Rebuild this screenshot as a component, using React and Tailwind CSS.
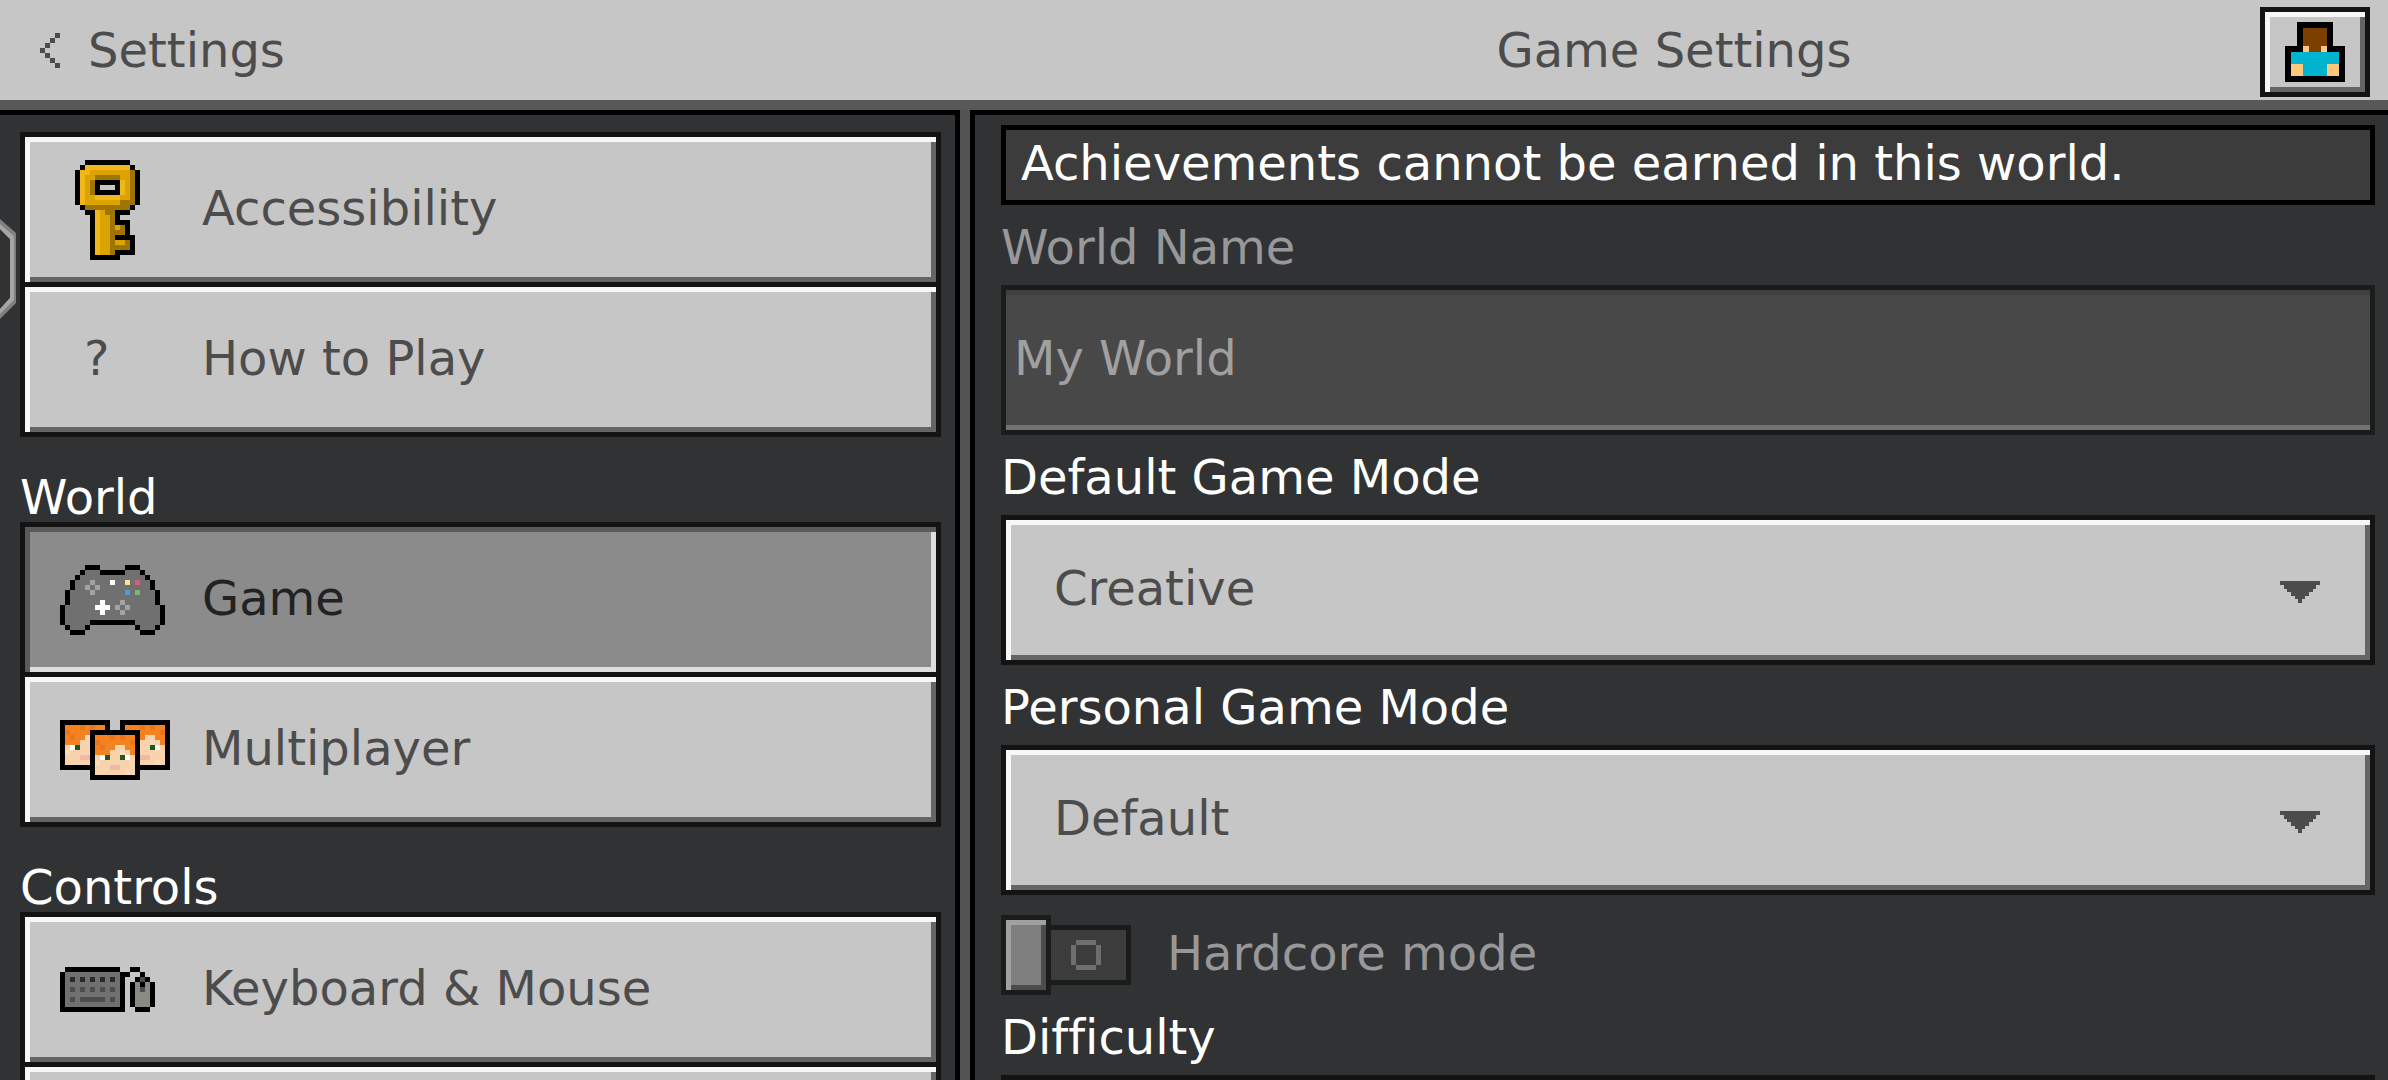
import { useId, useState } from 'react'

const colors = {
  k: '#000000', y: '#f0b71e', g: '#dba400', d: '#9f7500',
  m: '#707070', a: '#8a8a84', s: '#a3a3a3', w: '#ffffff', e: '#2a2a2a', n: '#4d4d4d',
  l: '#fbe391', r: '#dc5c74', b: '#4f9fce', v: '#86b36c',
  o: '#f58220', O: '#e8761a', f: '#f8d3ae', F: '#fbdcbc', p: '#f2b7a5', t: '#1f5a16',
  h: '#7b3f00', c: '#00b3cf', i: '#fdc87d', x: '#4c4c4c',
}

const key = [
  '..kkkkkkkkk..',
  '.kyyyyyyyyyk.',
  'kyyggggggggdk',
  'kyggdddddggdk',
  'kygdkkkkkygdk',
  'kygdk...kygdk',
  'kygdkkkkkygdk',
  'kyggyyyyyggdk',
  'kygggggggdddk',
  '.kdddddddddk.',
  '..kkygddkkk..',
  '...kyggdk....',
  '...kyggdkkk..',
  '...kyggdgdk..',
  '...kyggdddk..',
  '...kyggdkkkk.',
  '...kyggdggdk.',
  '...kyggddddk.',
  '...kyggdkkkk.',
  '...kkkkkk....',
]

const controller = [
  '.....kkk.....kkk.....',
  '....kmmmkkkkkmmmk....',
  '...kmmmmmmmmmmmmmk...',
  '..kmmmsmmmwmmlmrmmk..',
  '..kmmsmsmmmmmmmmmmk..',
  '.kmmmmsmmmmmmbmvmmmk.',
  '.kmmmmmmmmmmmmmmmmmk.',
  '.kmmmmmmwmmmsmmmmmmk.',
  'kmmmmmmwwwmsmsmmmmmmk',
  'kmmmmmmmwmmmsmmmmmmmk',
  'kmmmmmmmmmmmmmmmmmmmk',
  'kmmmmmkkkkkkkkkmmmmmk',
  '.kmmmk.........kmmmk.',
  '..kkk...........kkk..',
]

const face = [
  'kkkkkkkkkk',
  'koooOoOook',
  'kOooooooOk',
  'koOooffook',
  'koooffFfok',
  'kfwtfftwfk',
  'kFfffffffk',
  'kfffppfffk',
  'kffffffFfk',
  'kkkkkkkkkk',
]

const keyboard = [
  '.kkkkkkkkkkk..kk...',
  'kmmmmmmmmmmmkk..k..',
  'kmemememememk..knk.',
  'kmmmmmmmmmmmk.kakak',
  'kmnmnmnmnmnmk.kanak',
  'kmmmmmmmmmmmk.kaaak',
  'kmnmnnnnnmnmk.kaaak',
  'kmmmmmmmmmmmk.kaaak',
  'kkkkkkkkkkkkk..kkk.',
]

const avatar = [
  '..kkkkkk..',
  '..khhhhk..',
  '..khhhhk..',
  '..khhhhk..',
  'kkkihhikkk',
  'kcccccccck',
  'kcccccccck',
  'kiicccciik',
  'kiicccciik',
  'kkkkkkkkkk',
]

const back = ['...x', '..x.', '.x..', 'x...', '.x..', '..x.', '...x']

function Pixels({ rows, x = 0, y = 0 }) {
  return rows.map((row, j) =>
    [...row].map((c, i) => c !== '.' && <rect key={`${i}-${j}`} x={x + i} y={y + j} width="1" height="1" fill={colors[c]} />)
  )
}

const icons = {
  key: <svg viewBox="0 0 22 20" className="w-[110px] h-[100px]" shapeRendering="crispEdges" aria-hidden="true"><Pixels rows={key} x={3} /></svg>,
  help: <span className="w-[110px] pb-1 pl-6 text-left">?</span>,
  controller: <svg viewBox="0 0 22 14" className="w-[110px] h-[70px]" shapeRendering="crispEdges" aria-hidden="true"><Pixels rows={controller} /></svg>,
  faces: (
    <svg viewBox="0 0 22 12" className="w-[110px] h-[60px]" shapeRendering="crispEdges" aria-hidden="true">
      <Pixels rows={face} />
      <Pixels rows={face} x={12} />
      <Pixels rows={face} x={6} y={2} />
    </svg>
  ),
  keyboard: <svg viewBox="0 0 22 9" className="w-[110px] h-[45px]" shapeRendering="crispEdges" aria-hidden="true"><Pixels rows={keyboard} /></svg>,
}

const sections = [
  { items: [{ id: 'accessibility', label: 'Accessibility', icon: 'key' }, { id: 'how-to-play', label: 'How to Play', icon: 'help' }] },
  { title: 'World', items: [{ id: 'game', label: 'Game', icon: 'controller' }, { id: 'multiplayer', label: 'Multiplayer', icon: 'faces' }] },
  { title: 'Controls', items: [{ id: 'keyboard', label: 'Keyboard & Mouse', icon: 'keyboard' }, { id: 'controller', label: '', icon: null }] },
]

const raised = 'bg-[#c6c6c6] text-[#4c4c4c] shadow-[inset_5px_5px_0_#f7f7f7,inset_-5px_-5px_0_#656565]'
const pressed = 'bg-[#8b8b8b] text-[#222222] shadow-[inset_5px_5px_0_#5a5a5a,inset_-5px_-5px_0_#dedede]'

function NavButton({ item, active, onClick }) {
  return (
    <button onClick={onClick} aria-current={active ? 'page' : undefined} className={`flex h-[155px] w-full items-center gap-8 border-5 border-[#131313] pl-[35px] text-left ${active ? pressed : raised}`}>
      {icons[item.icon]}
      <span className="pb-1">{item.label}</span>
    </button>
  )
}

function Dropdown({ label, options }) {
  const id = useId()
  return (
    <div>
      <label htmlFor={id} className="block h-20 pt-1.5 leading-[72px] text-white">{label}</label>
      <div className="relative">
        <select id={id} className={`h-[150px] w-full appearance-none rounded-none border-5 border-[#131313] pl-12 pb-1 ${raised}`}>
          {options.map((o) => <option key={o}>{o}</option>)}
        </select>
        <svg viewBox="0 0 40 22" className="pointer-events-none absolute right-[55px] top-[66px] w-10" fill="#4c4c4c" shapeRendering="crispEdges" aria-hidden="true">
          <path d="M0 0H40V4H36V8H33V11H29V15H25V18H22V22H18V18H15V15H11V11H7V8H4V4H0Z" />
        </svg>
      </div>
    </div>
  )
}

export default function App() {
  const [page, setPage] = useState('game')

  return (
    <div className="flex h-screen flex-col overflow-hidden bg-[#535355] font-['DejaVu_Sans',sans-serif] text-[48px] [font-variant-ligatures:none]">
      <header className="flex h-[110px] shrink-0 border-b-10 border-[#58585a] bg-[#c6c6c6] text-[#4c4c4c]">
        <div className="flex w-[40.2%] items-center pl-10">
          <button className="flex items-center gap-7">
            <svg viewBox="0 0 4 7" className="w-5" shapeRendering="crispEdges" aria-hidden="true"><Pixels rows={back} /></svg>
            Settings
          </button>
        </div>
        <div className="relative flex flex-1 items-center justify-center">
          <h1>Game Settings</h1>
          <button aria-label="Profile" className={`absolute right-[18px] top-[7px] flex h-[90px] w-[110px] items-center justify-center border-5 border-[#131313] ${raised}`}>
            <svg viewBox="0 0 10 10" className="w-[60px]" shapeRendering="crispEdges" aria-hidden="true"><Pixels rows={avatar} /></svg>
          </button>
        </div>
      </header>

      <div className="flex min-h-0 flex-1 gap-[10px]">
        <nav className="relative w-[40.2%] overflow-hidden border-t-5 border-r-5 border-black bg-[#313233] pl-5 pr-[14px] pt-[17px]">
          <svg viewBox="0 0 16 100" className="absolute left-0 top-[104px] w-4" aria-hidden="true">
            <path d="M0 0L16 14V84L0 100V90L10 79V20L0 10Z" fill="#7f7f7f" />
            <path d="M0 5L14 17V81L0 95V90L10 79V20L0 10Z" fill="#a6a6a6" />
          </svg>
          {sections.map((s) => (
            <section key={s.items[0].id}>
              {s.title && <h2 className="h-[85px] pt-9 leading-12 text-white">{s.title}</h2>}
              <div className="flex flex-col -space-y-[5px]">
                {s.items.map((item) => <NavButton key={item.id} item={item} active={page === item.id} onClick={() => setPage(item.id)} />)}
              </div>
            </section>
          ))}
        </nav>

        <main className="flex-1 overflow-hidden border-t-5 border-l-5 border-black bg-[#313233] pl-[26px] pr-[13px] pt-[10px]">
          <p className="h-20 border-5 border-black bg-[#3c3c3c] pl-[15px] leading-[66px] text-white">Achievements cannot be earned in this world.</p>

          <label htmlFor="world-name" className="block h-20 pt-1.5 leading-[72px] text-[#98989a]">World Name</label>
          <input id="world-name" disabled defaultValue="My World" className="block h-[150px] w-full border-5 border-[#1a1b1b] bg-[#484848] pb-1 pl-2 text-[#a0a0a0] shadow-[inset_0_5px_0_#404040,inset_0_-5px_0_#727272]" />

          <Dropdown label="Default Game Mode" options={['Creative', 'Survival', 'Adventure']} />
          <Dropdown label="Personal Game Mode" options={['Default', 'Creative', 'Survival', 'Adventure']} />

          <label className="relative mt-5 flex h-20 items-center text-[#98989a]">
            <input type="checkbox" role="switch" disabled className="sr-only" />
            <span className="flex items-center">
              <span className="h-20 w-[50px] border-5 border-[#1a1b1b] bg-[#7f7f7f] shadow-[inset_5px_5px_0_#a0a0a0,inset_-5px_-5px_0_#4c4c4c]" />
              <span className="flex h-[60px] w-20 items-center border-y-5 border-r-5 border-[#1a1b1b] bg-[#3c3c3c] pl-5">
                <svg viewBox="0 0 6 6" className="w-[30px]" fill="#6e6e6e" shapeRendering="crispEdges" aria-hidden="true">
                  <path d="M1 0H5V1H1ZM0 1H1V5H0ZM5 1H6V5H5ZM1 5H5V6H1Z" />
                </svg>
              </span>
            </span>
            <span className="pb-1 pl-9 leading-[72px]">Hardcore mode</span>
          </label>

          <Dropdown label="Difficulty" options={['Peaceful', 'Easy', 'Normal', 'Hard']} />
        </main>
      </div>
    </div>
  )
}
